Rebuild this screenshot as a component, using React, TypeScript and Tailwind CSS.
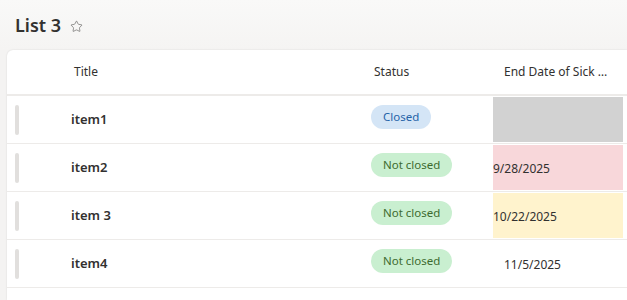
import { Star } from "lucide-react";

type Row = {
  title: string;
  status: "Closed" | "Not closed";
  date: string;
  fill?: string;
};

const rows: Row[] = [
  { title: "item1", status: "Closed", date: "", fill: "bg-[#d2d2d2]" },
  { title: "item2", status: "Not closed", date: "9/28/2025", fill: "bg-[#f8d7da]" },
  { title: "item 3", status: "Not closed", date: "10/22/2025", fill: "bg-[#fff3cd]" },
  { title: "item4", status: "Not closed", date: "11/5/2025" },
];

function StatusPill({ status }: { status: Row["status"] }) {
  const closed = status === "Closed";
  return (
    <span
      className={`inline-flex h-6 items-center rounded-full px-3 text-[11.5px] ${
        closed ? "bg-[#d4e5f6] text-[#2563a8]" : "bg-[#c9efd0] text-[#3d6b2f]"
      }`}
    >
      {status}
    </span>
  );
}

export default function App() {
  return (
    <div
      className="h-[300px] w-[627px] overflow-hidden bg-[#f4f3f2] text-[#323130]"
      style={{ fontFamily: '"Noto Sans", "Open Sans", sans-serif' }}
    >
      {/* Page header */}
      <div className="flex h-[50px] items-center gap-[9px] bg-gradient-to-b from-[#f9f9f8] to-[#f5f4f3] pl-[15px]">
        <h1 className="text-[18px] font-semibold leading-none">List 3</h1>
        <Star size={13} strokeWidth={1.2} className="mt-[2px] text-[#605e5c]" />
      </div>

      {/* List card */}
      <div className="ml-[7px] h-[250px] rounded-tl-[6px] bg-white shadow-[0_0_2px_rgba(0,0,0,0.12)]">
        {/* Column headers */}
        <div className="grid h-[46px] grid-cols-[56px_300px_130px_130px] border-b-2 border-[#edebe9] text-[12px]">
          <div />
          <div className="flex items-center pl-[11px]">Title</div>
          <div className="flex items-center pl-[11px]">Status</div>
          <div className="flex items-center truncate pl-[11px]">End Date of Sick …</div>
        </div>

        {rows.map((row) => (
          <div
            key={row.title}
            className="grid h-[48px] grid-cols-[56px_300px_130px_130px] border-b border-[#edebe9]"
          >
            <div className="flex items-center pl-[8px]">
              <div className="h-[30px] w-[4px] rounded-full bg-[#e1dfdd]" />
            </div>
            <div className="flex items-center pl-[8px] text-[13px] font-semibold">{row.title}</div>
            <div className="flex items-center pb-[6px] pl-[8px]">
              <StatusPill status={row.status} />
            </div>
            <div className="py-[1px]">
              <div
                className={`flex h-full items-center pt-[2px] text-[12px] ${
                  row.fill ? row.fill : "pl-[11px]"
                }`}
              >
                {row.date}
              </div>
            </div>
          </div>
        ))}
      </div>
    </div>
  );
}
